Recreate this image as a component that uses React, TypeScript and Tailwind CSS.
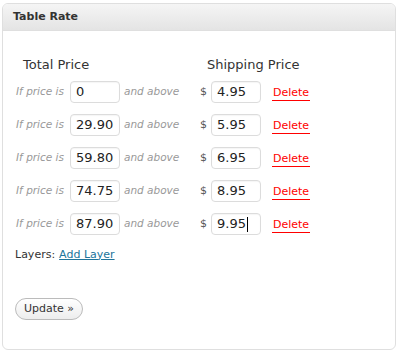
import React from "react";

const rows = [
  { total: "0", ship: "4.95" },
  { total: "29.90", ship: "5.95" },
  { total: "59.80", ship: "6.95" },
  { total: "74.75", ship: "8.95" },
  { total: "87.90", ship: "9.95", caret: true },
];

function Field({ value, caret }: { value: string; caret?: boolean }) {
  return (
    <div className="w-[50px] h-[22px] border border-[#dcdcdc] rounded-[4px] bg-white flex items-center pl-[5px] text-[13px] text-[#222] shadow-[inset_0_1px_1px_rgba(0,0,0,0.04)]">
      <span>{value}</span>
      {caret && <span className="inline-block w-px h-[15px] bg-black ml-px" />}
    </div>
  );
}

export default function App() {
  return (
    <div className="w-[398px] h-[352px] bg-white pt-[3px] pl-[2px]" style={{ fontFamily: '"DejaVu Sans", "Liberation Sans", sans-serif' }}>
      <div className="w-[394px] h-[347px] border border-[#dfdfdf] rounded-[6px] overflow-hidden flex flex-col">
        <div className="h-[27px] shrink-0 border-b border-[#dfdfdf] bg-gradient-to-b from-[#f5f5f5] to-[#e4e4e4] flex items-center pl-[10px]">
          <span className="text-[11px] font-bold text-[#333]">Table Rate</span>
        </div>
        <div className="flex flex-col">
          <div className="flex items-center h-[16px] mt-[26px] text-[13px] text-[#333]">
            <span className="ml-[20px] w-[184px]">Total Price</span>
            <span>Shipping Price</span>
          </div>
          <div className="flex flex-col mt-[8px] gap-[11px]">
            {rows.map((r, i) => (
              <div key={i} className="flex items-center h-[22px] pl-[13px]">
                <span className="w-[54px] text-[10.5px] italic text-[#999]">If price is</span>
                <Field value={r.total} />
                <span className="ml-[4px] w-[76px] text-[10.5px] italic text-[#999]">and above</span>
                <span className="w-[11px] text-[11px] text-[#555]">$</span>
                <Field value={r.ship} caret={r.caret} />
                <span className="ml-[11px] mt-[2px] px-[1px] pb-[1px] border-b border-[#ff0000] text-[11px] text-[#ff0000] leading-[13px]">Delete</span>
              </div>
            ))}
          </div>
          <div className="flex items-center mt-[13px] pl-[12px] text-[11px] text-[#333] h-[14px]">
            <span>Layers:</span>
            <span className="ml-[4px] text-[#21759b] underline">Add Layer</span>
          </div>
          <div className="pl-[12px] mt-[33px]">
            <button className="h-[22px] px-[8px] rounded-full border border-[#bbb] bg-gradient-to-b from-white to-[#ededed] text-[11px] text-[#333]">Update »</button>
          </div>
        </div>
      </div>
    </div>
  );
}
